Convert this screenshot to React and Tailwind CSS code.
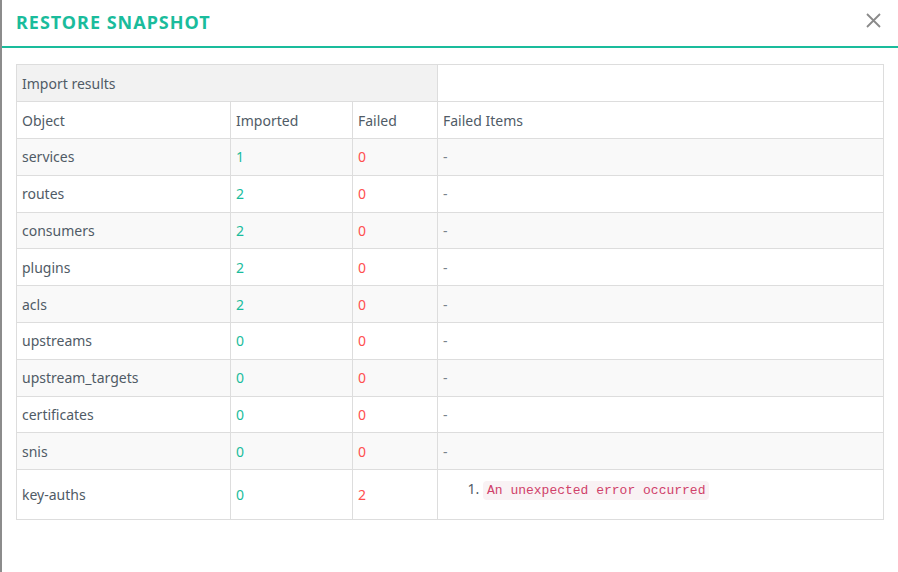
import React from "react";

const rows = [
  { name: "services", imported: 1, failed: 0 },
  { name: "routes", imported: 2, failed: 0 },
  { name: "consumers", imported: 2, failed: 0 },
  { name: "plugins", imported: 2, failed: 0 },
  { name: "acls", imported: 2, failed: 0 },
  { name: "upstreams", imported: 0, failed: 0 },
  { name: "upstream_targets", imported: 0, failed: 0 },
  { name: "certificates", imported: 0, failed: 0 },
  { name: "snis", imported: 0, failed: 0 },
  { name: "key-auths", imported: 0, failed: 2, errors: ["An unexpected error occurred"] },
];

const cell = "border border-[#dddddd] px-[5px] py-0 align-middle";

export default function App() {
  return (
    <div
      className="flex w-[898px] h-[572px] bg-white text-[14px] text-[#505b66]"
      style={{ fontFamily: "'Noto Sans', 'Open Sans', sans-serif" }}
    >
      <div className="w-[2px] bg-[#8c8c8c]" />
      <div className="flex-1 flex flex-col">
        {/* header */}
        <div className="h-[48px] flex items-center justify-between pl-[14px] pr-[16px] border-b-2 border-[#1abc9c]">
          <h3 className="text-[18px] font-bold text-[#1abc9c] tracking-[1px] mt-[-1px]">
            RESTORE SNAPSHOT
          </h3>
          <button className="text-[#8a8a8a] mt-[-6px]">
            <svg width="17" height="17" viewBox="0 0 17 17" fill="none" stroke="currentColor" strokeWidth="1.8">
              <path d="M2 2 L15 15 M15 2 L2 15" />
            </svg>
          </button>
        </div>

        {/* body */}
        <div className="pt-[16px] pl-[14px] pr-[12px]">
          <table className="w-[868px] border-collapse table-fixed">
            <colgroup>
              <col className="w-[214px]" />
              <col className="w-[122px]" />
              <col className="w-[85px]" />
              <col />
            </colgroup>
            <thead>
              <tr className="h-[37px]">
                <th colSpan={3} className={`${cell} bg-[#f2f2f2] text-left font-normal`}>
                  Import results
                </th>
                <th className={`${cell} bg-white`} />
              </tr>
              <tr className="h-[37px]">
                <th className={`${cell} text-left font-normal`}>Object</th>
                <th className={`${cell} text-left font-normal`}>Imported</th>
                <th className={`${cell} text-left font-normal`}>Failed</th>
                <th className={`${cell} text-left font-normal`}>Failed Items</th>
              </tr>
            </thead>
            <tbody>
              {rows.map((r, i) => (
                <tr
                  key={r.name}
                  className={`${r.errors ? "h-[50px]" : "h-[36.8px]"} ${i % 2 === 0 ? "bg-[#f9f9f9]" : "bg-white"}`}
                >
                  <td className={cell}>{r.name}</td>
                  <td className={`${cell} text-[#1abc9c]`}>{r.imported}</td>
                  <td className={`${cell} text-[#ff4f4f]`}>{r.failed}</td>
                  <td className={`${cell} ${r.errors ? "" : "text-[#7a838c]"}`}>
                    {r.errors ? (
                      <ol className="list-decimal pl-[40px] mt-[-10px]">
                        {r.errors.map((e) => (
                          <li key={e}>
                            <code
                              className="text-[13px] text-[#d0416a] bg-[#f9f2f4] rounded-[4px] px-[4px] py-[2px]"
                              style={{ fontFamily: "'Liberation Mono', monospace" }}
                            >
                              {e}
                            </code>
                          </li>
                        ))}
                      </ol>
                    ) : (
                      "-"
                    )}
                  </td>
                </tr>
              ))}
            </tbody>
          </table>
        </div>
      </div>
    </div>
  );
}
